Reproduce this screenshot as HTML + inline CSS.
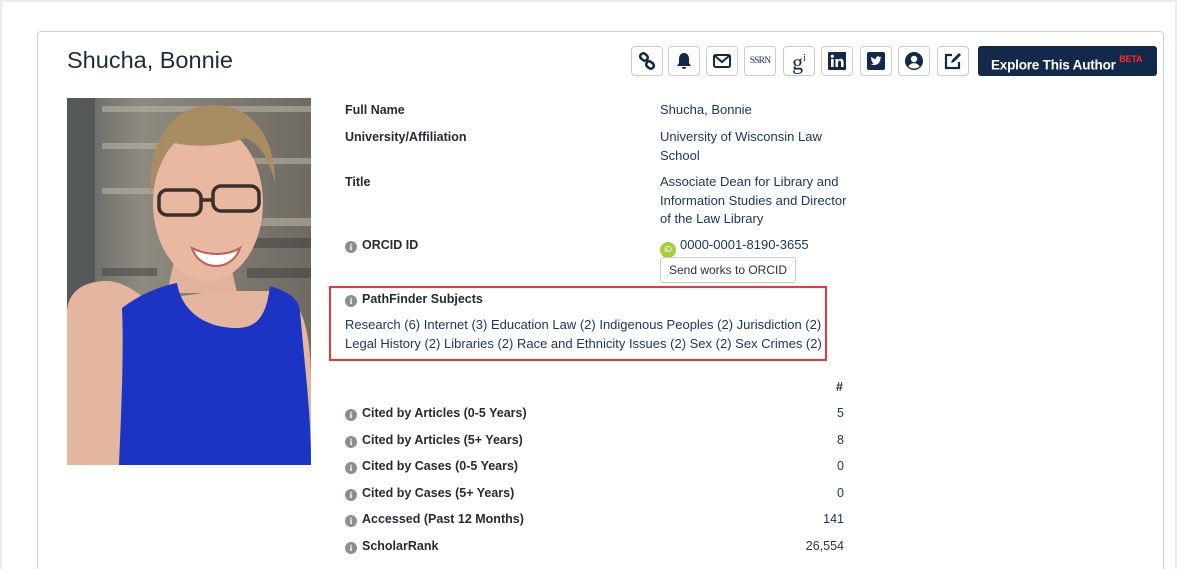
<!DOCTYPE html>
<html><head><meta charset="utf-8"><style>
*{box-sizing:border-box;margin:0;padding:0}
html,body{width:1177px;height:569px;overflow:hidden}
body{background:#ececec;font-family:"Liberation Sans",Arial,sans-serif;position:relative;color:#222}
.page{position:absolute;left:2px;top:2px;width:1173px;height:567px;background:#fff}
.card{position:absolute;left:37px;top:31px;width:1127px;height:560px;border:1px solid #cfcfcf;border-radius:4px;background:#fff}
.a{position:absolute;white-space:nowrap}
h1{position:absolute;left:67px;top:47px;font-size:23.5px;font-weight:normal;color:#1c2a3e}
.btn{position:absolute;top:46px;width:32px;height:30px;border:1px solid #ccc;border-radius:4px;background:#fff;display:flex;align-items:center;justify-content:center}
.btn svg{width:20px;height:20px}
.exp{position:absolute;left:978px;top:46px;width:179px;height:30px;background:#13294b;border-radius:3px;color:#fff;font-weight:bold;font-size:13.5px;line-height:30px;padding-left:13px;white-space:nowrap;letter-spacing:-0.2px}
.exp sup{color:#ff2a2a;font-size:9px;position:relative;top:-2px}
.lbl{font-weight:bold;font-size:12.5px;color:#262a36}
.val{font-size:13px;color:#1d3566;line-height:18.5px}
.i{display:inline-block;width:12px;height:12px;border-radius:50%;background:#8a8f96;color:#fff;font-size:9px;font-weight:bold;text-align:center;line-height:12px;margin-right:5px;vertical-align:-1px;font-family:"Liberation Serif",serif}
.num{position:absolute;right:333px;font-size:12.5px;color:#1d3566}
.box{position:absolute;left:329px;top:286px;width:498px;height:75px;border:2px solid #e8373c}
.send{position:absolute;left:660px;top:257px;width:136px;height:26px;border:1px solid #ccc;border-radius:3px;font-size:12px;color:#263048;text-align:center;line-height:24px}
</style></head><body>
<div class="page"></div>
<div class="card"></div>
<h1>Shucha, Bonnie</h1>

<div class="btn" style="left:631px"><svg viewBox="0 0 20 20"><g fill="none" stroke="#13294b" stroke-width="2.6"><rect x="3" y="3" width="8" height="6" rx="3" transform="rotate(40 7 6)"/><rect x="9" y="11" width="8" height="6" rx="3" transform="rotate(40 13 14)"/></g></svg></div>
<div class="btn" style="left:668px"><svg viewBox="0 0 20 20"><path d="M10 2c-3.5 0-5 3-5 6v4l-2 3h14l-2-3V8c0-3-1.5-6-5-6z M8 16a2 2 0 0 0 4 0z" fill="#13294b"/></svg></div>
<div class="btn" style="left:706px"><svg viewBox="0 0 20 20"><rect x="2" y="4" width="16" height="12" rx="1.5" fill="none" stroke="#13294b" stroke-width="2"/><path d="M3 5l7 6 7-6" fill="none" stroke="#13294b" stroke-width="2"/></svg></div>
<div class="btn" style="left:744px"><span style="font-family:'Liberation Serif',serif;font-size:9.5px;color:#13294b;letter-spacing:-0.8px">SSRN</span></div>
<div class="btn" style="left:783px"><span style="font-family:'Liberation Serif',serif;font-size:22px;color:#13294b;line-height:20px">g<sup style="font-size:10px">i</sup></span></div>
<div class="btn" style="left:821px"><svg viewBox="0 0 20 20"><rect x="1" y="1" width="18" height="18" rx="1" fill="#13294b"/><rect x="4" y="8" width="2.6" height="8" fill="#fff"/><circle cx="5.3" cy="5.2" r="1.6" fill="#fff"/><path d="M8.5 8h2.5v1.3c.6-1 1.6-1.5 2.8-1.5 2 0 2.8 1.3 2.8 3.6V16H14v-4.2c0-1.2-.3-2-1.3-2S11 10.6 11 11.8V16H8.5z" fill="#fff"/></svg></div>
<div class="btn" style="left:860px"><svg viewBox="0 0 20 20"><rect x="1" y="1" width="18" height="18" rx="2" fill="#13294b"/><path d="M15.5 6.3c-.4.2-.9.3-1.3.4.5-.3.8-.7 1-1.2-.4.3-.9.5-1.4.6a2.2 2.2 0 0 0-3.8 2A6.3 6.3 0 0 1 5.4 5.8a2.2 2.2 0 0 0 .7 2.9c-.4 0-.7-.1-1-.3 0 1.1.8 2 1.8 2.2-.3.1-.7.1-1 0 .3.9 1.1 1.5 2.1 1.5A4.4 4.4 0 0 1 4.7 13c1 .6 2.1 1 3.4 1 4.1 0 6.3-3.4 6.3-6.3v-.3c.4-.3.8-.7 1.1-1.1z" fill="#fff"/></svg></div>
<div class="btn" style="left:898px"><svg viewBox="0 0 20 20"><circle cx="10" cy="10" r="9" fill="#13294b"/><circle cx="10" cy="8" r="3.2" fill="#fff"/><path d="M4.5 15.5c1.3-2.3 3.2-3.2 5.5-3.2s4.2.9 5.5 3.2c-1.5 1.3-3.4 2-5.5 2s-4-.7-5.5-2z" fill="#fff"/></svg></div>
<div class="btn" style="left:937px"><svg viewBox="0 0 20 20"><path d="M9 4H3v13h13v-6" fill="none" stroke="#13294b" stroke-width="2.2"/><path d="M8 12l1-3 7-7 2 2-7 7z" fill="#13294b"/></svg></div>
<div class="exp">Explore This Author <sup>BETA</sup></div>

<svg class="a" style="left:67px;top:98px" width="244" height="367" viewBox="0 0 244 367">
<defs><linearGradient id="bg" x1="0" x2="1"><stop offset="0" stop-color="#5d605e"/><stop offset=".3" stop-color="#8d8a80"/><stop offset="1" stop-color="#6f6a62"/></linearGradient></defs>
<rect width="244" height="367" fill="url(#bg)"/>
<rect x="0" y="0" width="28" height="367" fill="#55595a"/>
<g fill="#b8b2a3" opacity=".6"><rect x="35" y="8" width="209" height="6"/><rect x="35" y="45" width="70" height="6"/><rect x="180" y="60" width="64" height="6"/><rect x="35" y="90" width="60" height="6"/><rect x="180" y="120" width="64" height="8"/></g>
<g fill="#3e3e3e" opacity=".5"><rect x="180" y="140" width="64" height="10"/><rect x="35" y="170" width="55" height="8"/><rect x="180" y="170" width="64" height="10"/></g>
<path d="M0 367V215c0-20 15-32 40-32 20 0 40 20 40 20l70-10 60 0c25 5 34 40 34 90v84z" fill="#e4b6a0"/>
<path d="M110 150h50l10 45h-70z" fill="#e2b39c"/>
<path d="M55 210c20-15 40-22 55-25 5 30 30 45 60 45 25 0 30-20 33-42 15 5 28 10 30 25 5 60 11 100 11 154H52c2-50 5-110 3-157z" fill="#1b34c4"/>
<ellipse cx="141" cy="105" rx="55" ry="78" fill="#e9b8a1"/>
<path d="M84 95c-4-50 20-88 62-88 38 0 62 30 62 78-6-25-16-40-30-45-20 8-50 10-70 5-12 10-18 30-24 50z" fill="#a88c62"/>
<g fill="none" stroke="#3b302b" stroke-width="3.5"><rect x="92" y="92" width="42" height="25" rx="8"/><rect x="146" y="88" width="46" height="25" rx="8"/><path d="M134 102h12"/></g>
<path d="M125 150c15 8 35 8 48 0-4 12-14 18-24 18s-20-6-24-18z" fill="#fff" stroke="#c0605a" stroke-width="2"/>
</svg>

<div class="a lbl" style="left:345px;top:103px">Full Name</div>
<div class="a val" style="left:660px;top:101px">Shucha, Bonnie</div>
<div class="a lbl" style="left:345px;top:130px">University/Affiliation</div>
<div class="a val" style="left:660px;top:128px">University of Wisconsin Law<br>School</div>
<div class="a lbl" style="left:345px;top:175px">Title</div>
<div class="a val" style="left:660px;top:173px">Associate Dean for Library and<br>Information Studies and Director<br>of the Law Library</div>
<div class="a lbl" style="left:345px;top:238px"><span class="i">i</span>ORCID ID</div>
<div class="a val" style="left:660px;top:236px"><span style="display:inline-block;width:16px;height:16px;border-radius:50%;background:#a6ce39;color:#fff;font-size:8px;text-align:center;line-height:16px;vertical-align:-3px;margin-right:4px">iD</span>0000-0001-8190-3655</div>
<div class="send">Send works to ORCID</div>

<div class="box"></div>
<div class="a lbl" style="left:345px;top:292px"><span class="i">i</span>PathFinder Subjects</div>
<div class="a val" style="left:345px;top:316px">Research (6) Internet (3) Education Law (2) Indigenous Peoples (2) Jurisdiction (2)<br>Legal History (2) Libraries (2) Race and Ethnicity Issues (2) Sex (2) Sex Crimes (2)</div>

<div class="a lbl" style="left:836px;top:380px">#</div>
<div class="a lbl" style="left:345px;top:406px"><span class="i">i</span>Cited by Articles (0-5 Years)</div><div class="num" style="top:406px">5</div>
<div class="a lbl" style="left:345px;top:433px"><span class="i">i</span>Cited by Articles (5+ Years)</div><div class="num" style="top:433px">8</div>
<div class="a lbl" style="left:345px;top:459px"><span class="i">i</span>Cited by Cases (0-5 Years)</div><div class="num" style="top:459px">0</div>
<div class="a lbl" style="left:345px;top:486px"><span class="i">i</span>Cited by Cases (5+ Years)</div><div class="num" style="top:486px">0</div>
<div class="a lbl" style="left:345px;top:512px"><span class="i">i</span>Accessed (Past 12 Months)</div><div class="num" style="top:512px">141</div>
<div class="a lbl" style="left:345px;top:539px"><span class="i">i</span>ScholarRank</div><div class="num" style="top:539px;color:#333">26,554</div>
</body></html>
